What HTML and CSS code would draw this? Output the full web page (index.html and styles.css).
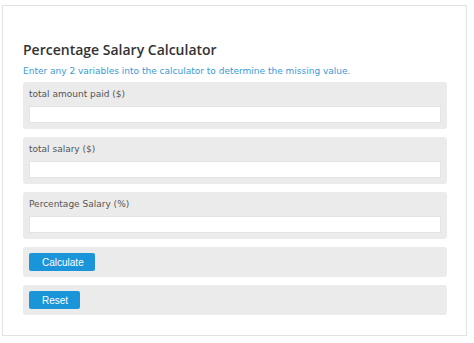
FILE: index.html
```html
<!DOCTYPE html>
<html lang="en">
<head>
    <meta charset="UTF-8">
    <meta name="viewport" content="width=device-width, initial-scale=1.0">
    <title>Percentage Salary Calculator</title>
    <link rel="stylesheet" href="styles.css">
</head>
<body>
    <div class="calc">
        <h2 class="calc-title">Percentage Salary Calculator</h2>
        <p class="calc-desc">Enter any 2 variables into the calculator to determine the missing value.</p>

        <!-- inputs -->
        <div class="row">
            <label class="row-label">total amount paid ($)</label>
            <input class="row-input" type="text">
        </div>
        <div class="row">
            <label class="row-label">total salary ($)</label>
            <input class="row-input" type="text">
        </div>
        <div class="row">
            <label class="row-label">Percentage Salary (%)</label>
            <input class="row-input" type="text">
        </div>

        <!-- buttons -->
        <div class="row">
            <button class="btn btn-calc">Calculate</button>
        </div>
        <div class="row">
            <button class="btn btn-reset">Reset</button>
        </div>
    </div>
</body>
</html>
```

FILE: styles.css
```css
body{
    margin: 5px 7px 0 2px;
    background-color: #fff;
    font-family: "DejaVu Sans", Verdana, sans-serif;
}

.calc{
    border: 1px solid #e2e2e2;
    box-shadow: 0 0 1px #eee;
    padding: 33px 19px 20px 20px;
    display: flex;
    flex-direction: column;
    gap: 8px;
}

.calc-title{
    margin: 0;
    font-family: "Open Sans", sans-serif;
    font-weight: 600;
    font-size: 14px;
    line-height: 22px;
    color: #333;
}
.calc-desc{
    margin: -4px 0 -3px 0;
    font-size: 9px;
    line-height: 12px;
    color: #3a9ad9;
}

.row{
    background-color: #ebebeb;
    border-radius: 3px;
    padding: 6px;
    display: flex;
    flex-direction: column;
}
.row-label{
    font-size: 9px;
    line-height: 12px;
    color: #555;
    margin-bottom: 6px;
}
.row-input{
    height: 17px;
    box-sizing: border-box;
    border: 1px solid #e4e4e4;
    background-color: #fff;
    margin: 0;
}

.btn{
    align-self: flex-start;
    height: 18px;
    padding: 0 13px;
    border: none;
    border-radius: 2px;
    background-color: #1b95da;
    color: #fff;
    font-family: "Liberation Sans", Arial, sans-serif;
    font-size: 10px;
}
.btn-calc{
    width: 66px;
}
.btn-reset{
    width: 51px;
}
```
